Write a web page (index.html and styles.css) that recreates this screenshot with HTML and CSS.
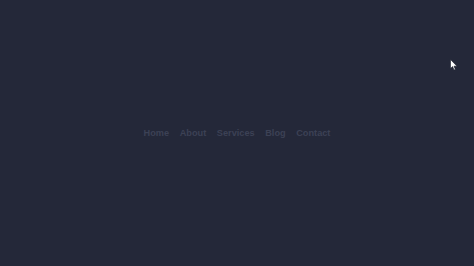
FILE: index.html
```html
<!DOCTYPE html>
<html lang="en">
<head>
<meta charset="utf-8">
<title>Nav</title>
<link rel="stylesheet" href="styles.css">
</head>
<body>
<main class="stage">
  <nav class="nav">
    <a class="nav-link" href="#">Home</a>
    <a class="nav-link" href="#">About</a>
    <a class="nav-link" href="#">Services</a>
    <a class="nav-link" href="#">Blog</a>
    <a class="nav-link" href="#">Contact</a>
  </nav>
  <svg class="cursor" width="8" height="12" viewBox="0 0 8 12" aria-hidden="true">
    <path d="M0.5 0.5 L0.5 9.5 L2.6 7.6 L4 11 L5.4 10.4 L4 7.2 L7 7.2 Z" fill="#ffffff" stroke="#1a1d2a" stroke-width="0.6"/>
  </svg>
</main>
</body>
</html>
```
FILE: styles.css
```css
html, body {
  margin: 0;
  padding: 0;
  height: 100%;
  background: #242839;
}
.stage {
  position: relative;
  height: 100vh;
  display: flex;
  align-items: center;
  justify-content: center;
}
.nav {
  display: flex;
  gap: 10.6px;
  margin-top: -1px;
}
.nav-link {
  font-family: "Liberation Sans", Arial, sans-serif;
  font-weight: bold;
  font-size: 9.2px;
  color: #3c4155;
  text-decoration: none;
}
.cursor {
  position: absolute;
  left: 450px;
  top: 59px;
}
```
